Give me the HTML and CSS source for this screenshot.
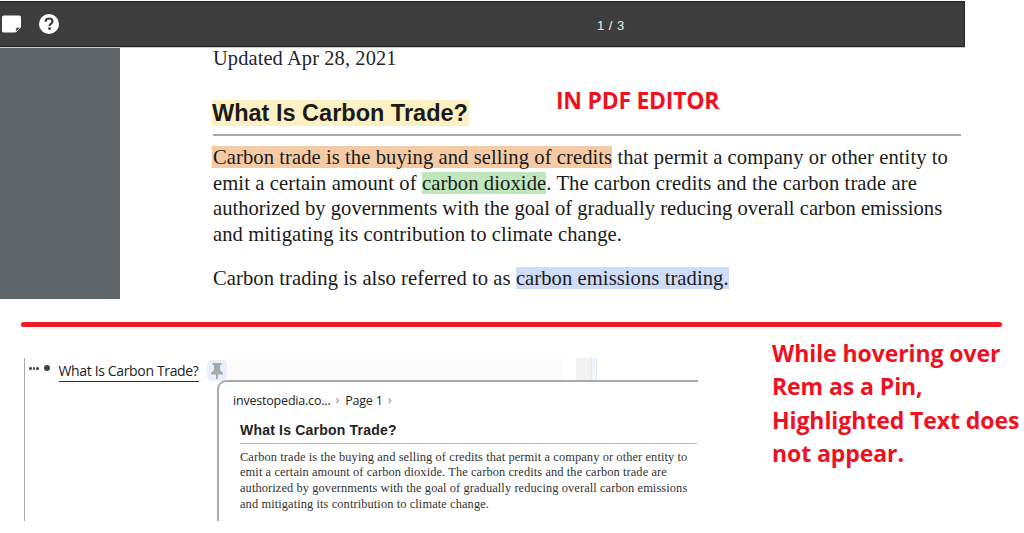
FILE: index.html
```html
<!DOCTYPE html>
<html lang="en">
<head>
<meta charset="utf-8">
<title>Carbon Trade</title>
<link rel="stylesheet" href="styles.css">
</head>
<body>
<section class="pdf">
  <header class="toolbar">
    <div class="tools">
      <svg class="icon-note" viewBox="0 0 20 18" width="19" height="18"><path d="M2 0H18a2 2 0 0 1 2 2V12L14 18H2a2 2 0 0 1-2-2V2a2 2 0 0 1 2-2Z" fill="#fff"/><path d="M14.5 17.5V12.5H19.5Z" fill="#3d3d3d" stroke="#fff" stroke-width=".8"/></svg>
      <svg class="icon-help" viewBox="0 0 20 20" width="20" height="20"><circle cx="10" cy="10" r="10" fill="#fff"/><path d="M6.6 7.7C6.7 5.6 8.2 4.5 10.1 4.5C12.1 4.5 13.5 5.7 13.5 7.4C13.5 9.6 10.6 9.7 10.6 11.9" fill="none" stroke="#3d3d3d" stroke-width="2.2"/><rect x="9.3" y="13.3" width="2.5" height="2.5" fill="#3d3d3d"/></svg>
    </div>
    <div class="pages">1 / 3</div>
  </header>
  <div class="viewer">
    <aside class="side"></aside>
    <article class="doc">
      <p class="updated">Updated Apr 28, 2021</p>
      <h1 class="title"><span class="hl-yellow">What Is Carbon Trade?</span></h1>
      <div class="para">
        <div class="ln-a"><span class="hl-orange">Carbon trade is the buying and selling of credits</span> that permit a company or other entity to</div>
        <div class="ln-b">emit a certain amount of <span class="hl-green">carbon dioxide</span>. The carbon credits and the carbon trade are</div>
        <div class="ln-c">authorized by governments with the goal of gradually reducing overall carbon emissions</div>
        <div class="ln-a">and mitigating its contribution to climate change.</div>
      </div>
      <p class="para second ln-a">Carbon trading is also referred to as <span class="hl-blue">carbon emissions trading.</span></p>
    </article>
  </div>
  <div class="note-pdf">IN PDF EDITOR</div>
</section>
<div class="divider"></div>
<section class="lower">
  <div class="rem">
    <div class="rem-row">
      <span class="dots"><i></i><i></i><i></i></span>
      <span class="bullet"></span>
      <span class="rem-title">What Is Carbon Trade?</span>
      <span class="pin">
        <svg viewBox="0 0 14 16" width="14" height="16"><path d="M2.5 0H11.5V2H10V7L13 10V11.5H8V16H6V11.5H1V10L4 7V2H2.5Z" fill="#a9a9a9"/></svg>
      </span>
    </div>
    <div class="strip"></div>
    <div class="scroll"></div>
    <div class="popup">
      <div class="crumbs"><span>investopedia.co...</span><span class="chev">›</span><span>Page 1</span><span class="chev">›</span></div>
      <h2 class="pop-title">What Is Carbon Trade?</h2>
      <div class="pop-body">
        <div>Carbon trade is the buying and selling of credits that permit a company or other entity to</div>
        <div>emit a certain amount of carbon dioxide. The carbon credits and the carbon trade are</div>
        <div>authorized by governments with the goal of gradually reducing overall carbon emissions</div>
        <div>and mitigating its contribution to climate change.</div>
      </div>
    </div>
  </div>
  <div class="note-rem">
    <div>While hovering over</div>
    <div>Rem as a Pin,</div>
    <div>Highlighted Text does</div>
    <div>not appear.</div>
  </div>
</section>
</body>
</html>
```
FILE: styles.css
```css
* { box-sizing: border-box; }
html, body { margin: 0; padding: 0; }
body {
  width: 1024px;
  height: 533px;
  overflow: hidden;
  background: #fff;
  padding-top: 1px;
  font-family: "Liberation Serif", serif;
  color: #1a1a1a;
}
.pdf { position: relative; width: 965px; }
.toolbar {
  height: 46px;
  background: #3d3d3d;
  border: 1px solid #222;
  border-left: 0;
  box-shadow: 0 1px 0 #ccc;
  display: flex;
  align-items: center;
  position: relative;
}
.tools { display: flex; align-items: center; gap: 18px; padding-left: 2px; }
.pages {
  position: absolute;
  left: 597px;
  top: 15px;
  font: 13px/17px "Liberation Sans", sans-serif;
  color: #eee;
  word-spacing: 1px;
}
.viewer { display: flex; height: 252px; }
.side { width: 120px; background: #5f6468; }
.doc { width: 845px; padding: 0 4px 0 93px; }
.updated { margin: -1px 0 0; font-size: 20.4px; line-height: 24px; letter-spacing: .12px; color: #1f2530; }
.title {
  margin: 30px 0 0;
  padding-bottom: 8px;
  border-bottom: 2px solid #a8a8a8;
  font: bold 23.5px/26px "Liberation Sans", sans-serif;
  color: #1a1a1a;
  height: 36px;
}
.hl-yellow { background: #fbf1c2; padding: 0 1px 0 0; margin-left: -1px; display: inline-block; }
.para { margin: 0; padding-top: 9px; font-size: 20.6px; line-height: 25.7px; white-space: nowrap; }
.para.second { padding-top: 18px; }
.ln-a { letter-spacing: .07px; }
.ln-b { letter-spacing: .1px; }
.ln-c { letter-spacing: 0; }
.hl-orange { background: #f5cba6; margin-left: -1px; padding-left: 1px; }
.hl-green { background: #bfe6bd; }
.hl-blue { background: #cfdcf8; }
.note-pdf {
  position: absolute;
  left: 556px;
  top: 84px;
  font: bold 23px/30px "Open Sans", sans-serif;
  color: #ee1122;
  white-space: nowrap;
  letter-spacing: -.27px;
}
.divider {
  width: 981px;
  height: 5px;
  margin: 23px 0 0 21px;
  background: #ed1c24;
  border-radius: 3px;
}
.lower { display: flex; margin-top: 26px; height: 180px; }
.rem {
  position: relative;
  width: 748px;
  height: 168px;
}
.rem-row {
  position: absolute;
  left: 24px;
  top: 5px;
  width: 204px;
  height: 24px;
  display: flex;
  align-items: flex-start;
}
.rem::before {
  content: "";
  position: absolute;
  left: 24px;
  top: 5px;
  width: 1px;
  height: 163px;
  background: #aaa;
}
.dots { display: flex; gap: 1px; margin: 9px 0 0 5px; }
.dots i { width: 2.5px; height: 3px; border-radius: 50%; background: #444; }
.bullet { width: 6px; height: 6px; margin: 7px 0 0 5px; border-radius: 50%; background: #444; }
.rem-title {
  margin: 4px 0 0 9px;
  padding-bottom: 1px;
  border-bottom: 1px solid #333;
  font: 14px/18px "Open Sans", sans-serif;
  color: #222;
  letter-spacing: -.35px;
  white-space: nowrap;
}
.pin {
  position: absolute;
  left: 183px;
  top: 2px;
  width: 20px;
  height: 21px;
  background: #e8eefb;
  border-radius: 5px;
  display: flex;
  align-items: center;
  justify-content: center;
}
.strip { position: absolute; left: 228px; top: 5px; width: 335px; height: 22px; background: #fbfbfb; }
.scroll {
  position: absolute;
  left: 576px;
  top: 5px;
  width: 22px;
  height: 23px;
  background: linear-gradient(90deg, #f2f2f2 0 15px, #dde7fb 15px 16px, #f2f5fc 16px 20px, #dde7fb 20px 21px, #fff 21px);
}
.popup {
  position: absolute;
  left: 217px;
  top: 27px;
  width: 481px;
  height: 141px;
  background: #fff;
  border-top: 2px solid #aaa;
  border-left: 2px solid #aaa;
  border-top-left-radius: 9px;
  padding: 9px 0 0 14px;
}
.crumbs { display: flex; align-items: center; font: 12.5px/19px "Open Sans", sans-serif; color: #222; letter-spacing: -.2px; }
.chev { margin: -3px 6px 0 5px; color: #888; font-size: 13px; }
.pop-title {
  margin: 11px 0 0 7px;
  width: 457px;
  height: 23px;
  border-bottom: 1px solid #bbb;
  font: bold 14px/19px "Liberation Sans", sans-serif;
  color: #222;
  letter-spacing: .2px;
}
.pop-body {
  margin: 5.5px 0 0 7px;
  font-size: 12.4px;
  line-height: 15.8px;
  color: #333;
  letter-spacing: .1px;
  white-space: nowrap;
}
.note-rem {
  margin: -16px 0 0 24px;
  font: bold 23px/33.3px "Open Sans", sans-serif;
  color: #ee1122;
  letter-spacing: -.08px;
  white-space: nowrap;
}
```
